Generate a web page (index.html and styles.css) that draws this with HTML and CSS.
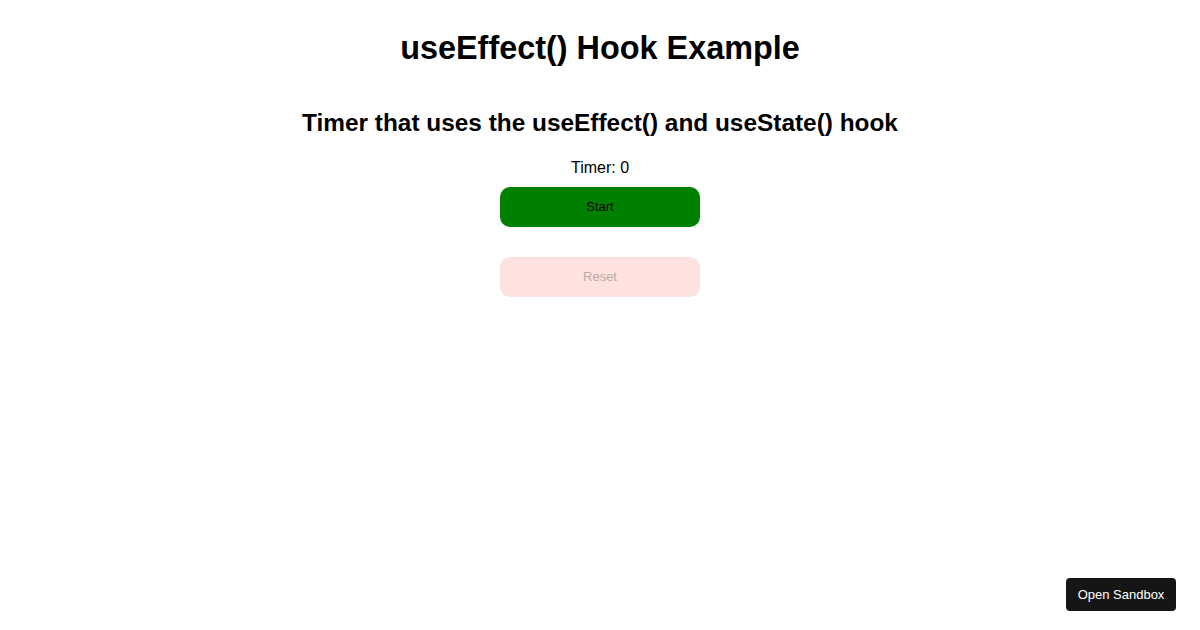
FILE: index.html
```html
<!DOCTYPE html>
<html lang="en">
<head>
    <meta charset="UTF-8">
    <meta name="viewport" content="width=device-width, initial-scale=1.0">
    <title>useEffect() Hook Example</title>
    <link rel="stylesheet" href="styles.css">
</head>
<body>

    <div class="App">
        <h1>useEffect() Hook Example</h1>

        <div class="timer">
            <h2>Timer that uses the useEffect() and useState() hook</h2>
            <p class="count">Timer: 0</p>
            <button class="btn start">Start</button>
            <button class="btn reset" disabled>Reset</button>
        </div>
    </div>

    <a class="sandbox" href="#">Open Sandbox</a>

</body>
</html>
```

FILE: styles.css
```css
body { margin: 8px; font-family: "Liberation Sans", Arial, sans-serif; color: #000; background: #fff; }
.App { text-align: center; }
h1 { font-size: 32.4px; margin: 22px 0 21px; }
h2 { font-size: 24.4px; margin: 42px 0 22px; }
.count { margin: 0 0 10px; font-size: 16px; line-height: 18px; }
.btn { display: block; width: 200px; height: 40px; margin: 0 auto 30px; padding: 0 0 2px; border: none; border-radius: 10px; font-family: "Liberation Sans", Arial, sans-serif; font-size: 13px; cursor: pointer; }
.start { background: #008000; color: #000; }
.reset { background: #fee2df; color: #bba9a6; cursor: default; }
.sandbox { position: fixed; right: 24px; bottom: 19px; width: 110px; height: 33px; line-height: 33px; text-align: center; background: #151515; color: #fff; border-radius: 4px; font-size: 13px; text-decoration: none; }
```
